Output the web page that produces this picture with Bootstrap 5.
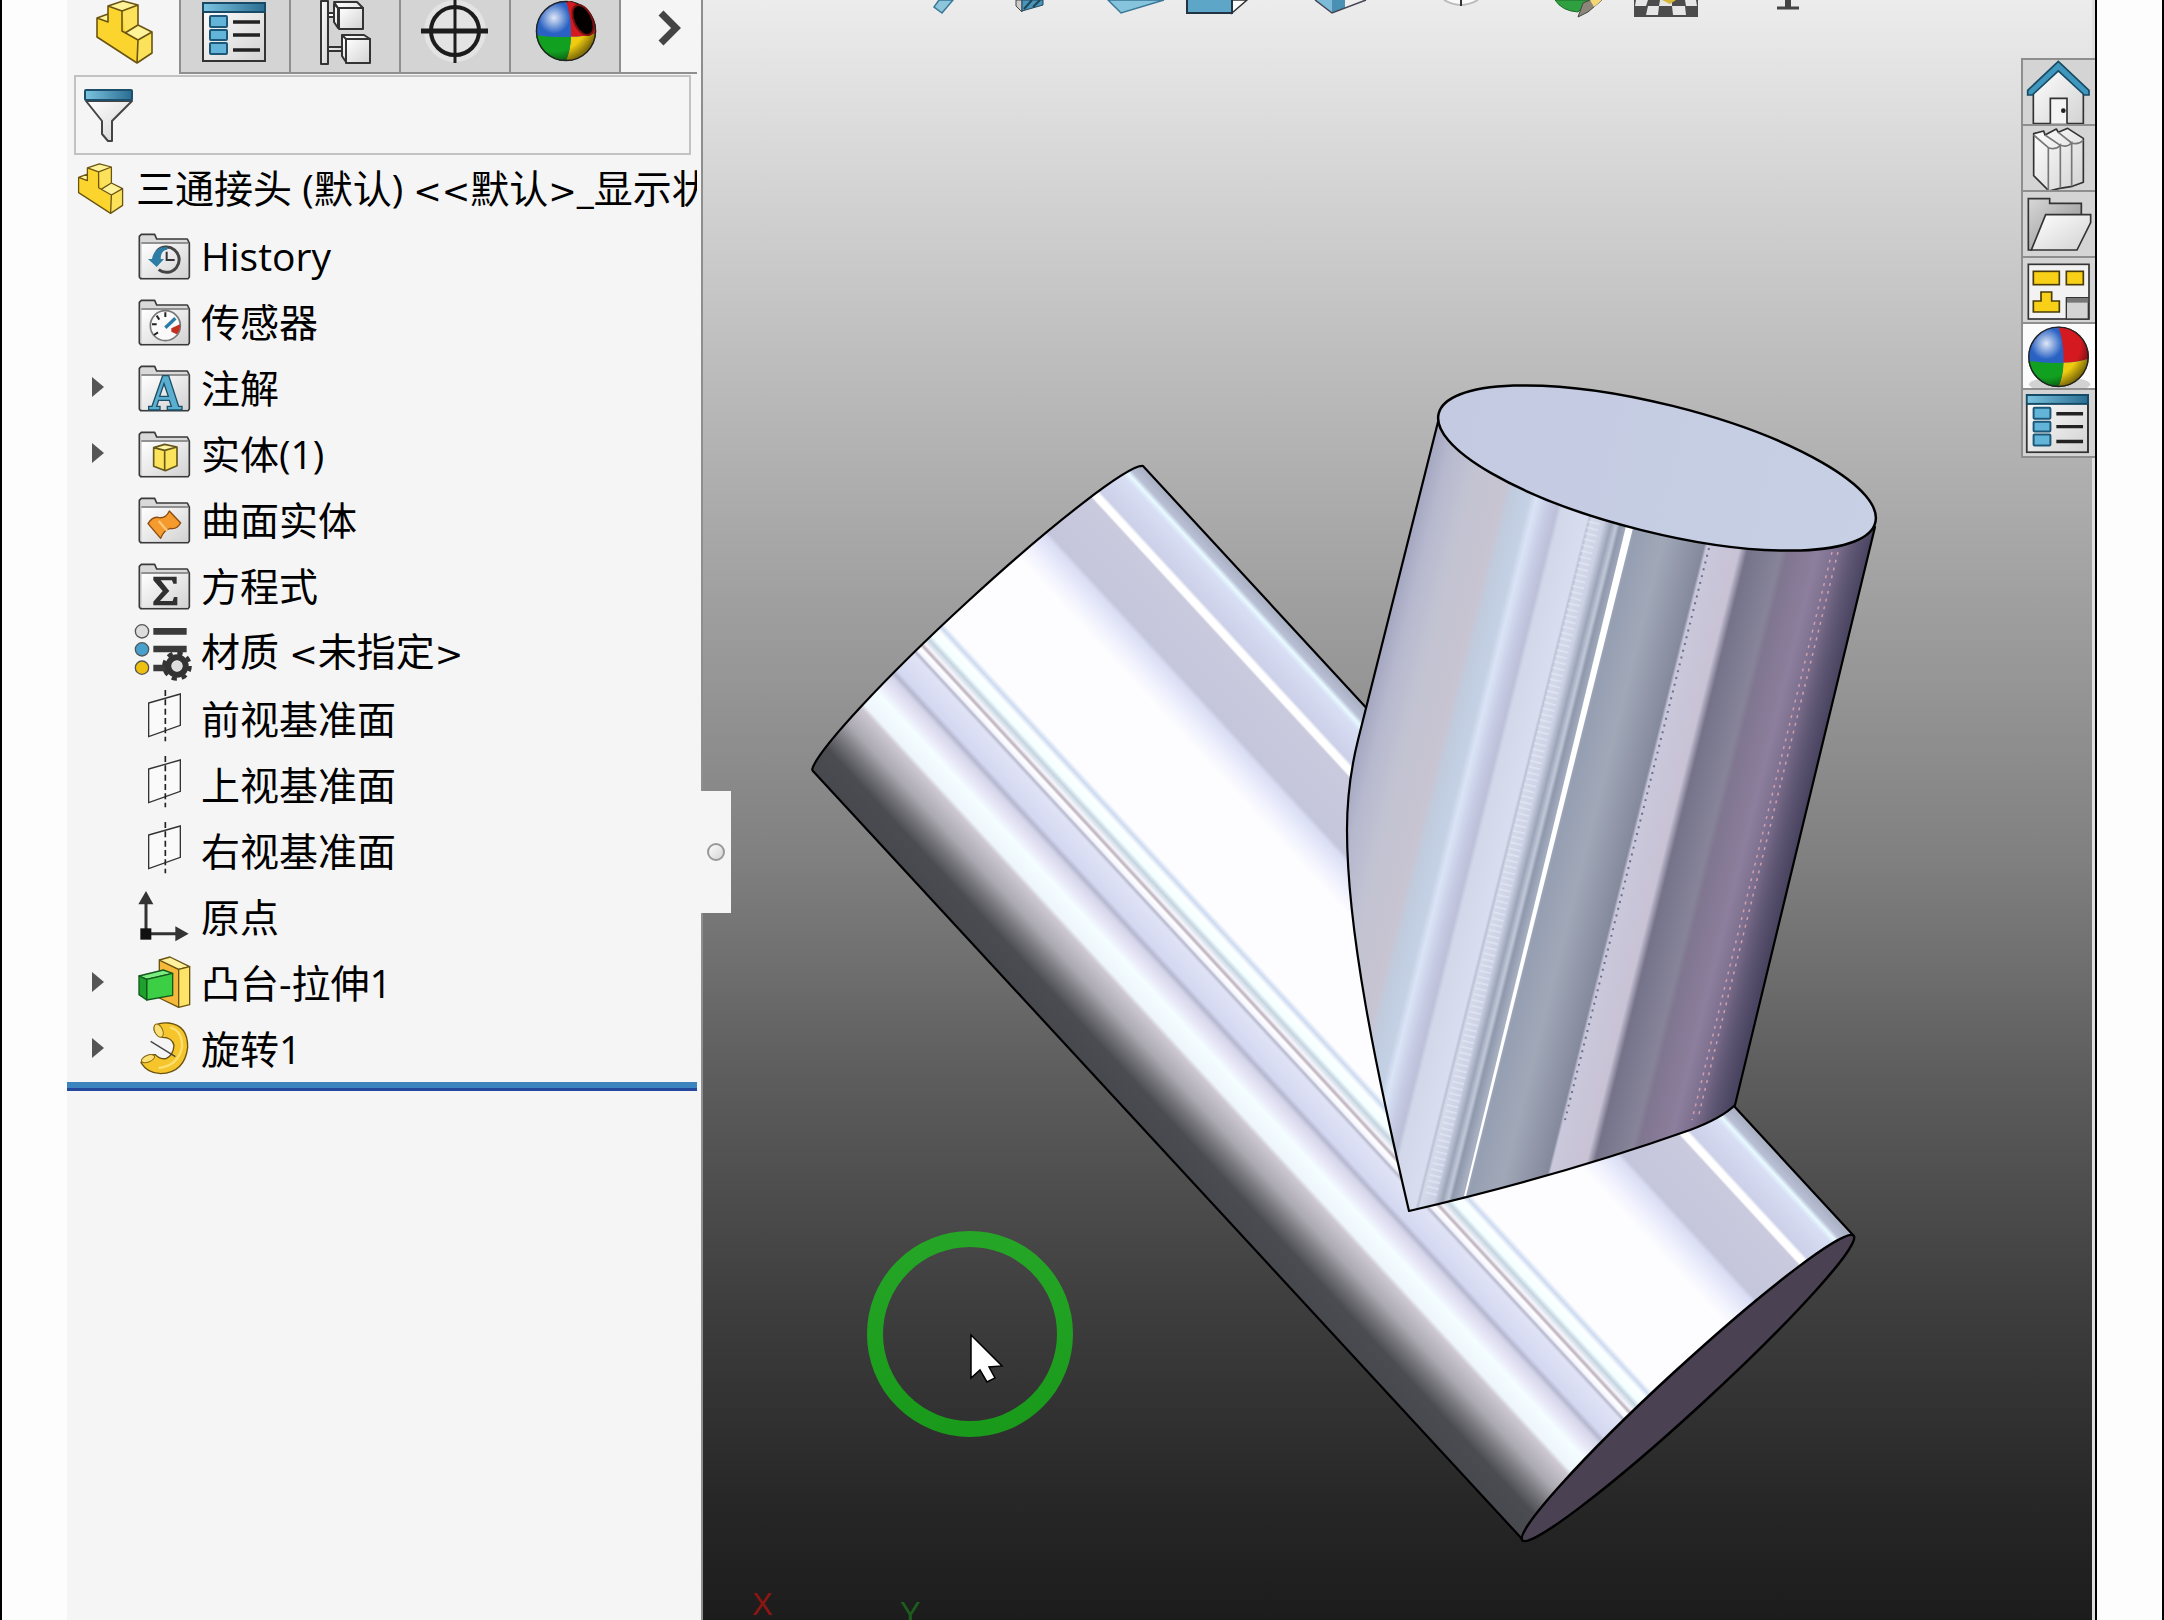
<!DOCTYPE html>
<html lang="zh-CN">
<head>
<meta charset="utf-8">
<meta name="viewport" content="width=device-width, initial-scale=1">
<title>三通接头</title>
<link href="https://cdn.jsdelivr.net/npm/bootstrap@5.3.0/dist/css/bootstrap.min.css" rel="stylesheet">
<style>
body{background:#fdfdfd;color:#000;font-family:"Open Sans","Noto Sans CJK SC",sans-serif;font-size:39px;line-height:48px}
svg{display:block;flex:none}
button{background:none;border:0;padding:0}
.edge-l{width:67px;border-left:2px solid #000}
.edge-r{width:69px;border-left:2px solid #000;border-right:2px solid #000}
.side{width:636px;background:#f5f5f5;border-right:2px solid #8e8e8e;padding-right:4px}
.tabs{height:74px}
.tabs .tab{width:110px;height:74px;background:#d4d4d4;border-left:2px solid #8f8f8f;border-bottom:2px solid #8f8f8f}
.tabs .tab svg{margin-left:-2px}
.tabs .tab.on{width:112px;background:#f5f5f5;border-color:transparent}
.tabs .more{border-left:2px solid #8f8f8f;border-bottom:2px solid #8f8f8f}
.filter{margin:1px 6px 0 7px;height:80px;border:2px solid #c2c2c2;padding:2px 0 0 8px}
.filter input{background:none;border:0;outline:0;min-width:0}
.root{height:68px;padding-left:9px;gap:10px;overflow:hidden}
.tree{height:859px}
.tree li{gap:7px;padding-left:25px}
.twist{width:35px;height:22px}
.ang{font-family:"DejaVu Sans",sans-serif;font-size:34px}
.rollback{height:9px;background:#3c84bd;border-bottom:3px solid #24489c}
.view{border-right:3px solid #dedede;background:linear-gradient(#ececec 0,#bdbdbd 22.2%,#808080 53%,#5e5e5e 66%,#3f3f3f 80%,#272727 92.6%,#1c1c1c 100%)}
.heads{left:197px}
.grip{left:-2px;top:791px;width:30px;height:122px;background:#f5f5f5}
.pane{top:58px;right:-3px;border:2px solid #8e8e8e;border-right:0;background:#d4d4d4}
.pane button{height:66px;border-bottom:2px solid #8e8e8e}
.pane button:last-child{border-bottom:0}
.pane .on{background:#fbfbfb}
</style>
<script src="https://cdn.jsdelivr.net/npm/bootstrap@5.3.0/dist/js/bootstrap.bundle.min.js"></script>
</head>
<body class="vh-100 d-flex overflow-hidden">
<svg width="0" height="0" class="position-absolute" aria-hidden="true">
<defs>
<linearGradient id="gb" x1="0" x2="1" y1="0" y2="0"><stop offset="0" stop-color="#7cc4e0"/><stop offset="1" stop-color="#2a6d92"/></linearGradient>
<linearGradient id="gw" x1="0" x2="1" y1="0" y2="1"><stop offset="0" stop-color="#fff"/><stop offset="1" stop-color="#d2d2d2"/></linearGradient>
<linearGradient id="gg" x1="0" x2="1" y1="0" y2="1"><stop offset="0" stop-color="#d8d8d8"/><stop offset="1" stop-color="#8c8c8c"/></linearGradient>
<radialGradient id="shade" cx=".3" cy=".28" r=".75"><stop offset="0" stop-color="#fff" stop-opacity=".85"/><stop offset=".35" stop-color="#fff" stop-opacity="0"/><stop offset=".75" stop-color="#000" stop-opacity="0"/><stop offset="1" stop-color="#000" stop-opacity=".45"/></radialGradient>
<symbol id="part" viewBox="95 0 60 65">
<path d="M97 18 108 14V6L123 1 138 5V25L152 32V53L137 63 97 37Z" fill="#fbd52e"/>
<path d="M108 6 123 1 138 5 122 11ZM97 18 108 14V22ZM125 33 138 25 152 32 138 40Z" fill="#fff39a"/>
<path d="M122 11 138 5V25L125 33V30ZM138 40 152 32V53L137 63Z" fill="#fbe25a"/>
<path d="M97 18 108 14V6L123 1 138 5V25L152 32V53L137 63 97 37ZM108 6 122 11V31L138 40 137 63M122 11 138 5M138 40 152 32M97 18 108 22V14M125 33 138 25" fill="none" stroke="#6a5410" stroke-width="1.6" stroke-linejoin="round"/>
</symbol>
<symbol id="ball" viewBox="0 0 64 64">
<circle cx="32" cy="32" r="31" fill="#2a62c4"/>
<path d="M32 1A31 31 0 0 1 63 34Q50 38 37 38 38 18 32 1Z" fill="#d41a20"/>
<path d="M63 34A31 31 0 0 1 32 63Q37 50 37 38 50 38 63 34Z" fill="#f0cc10"/>
<path d="M32 63A31 31 0 0 1 1 36Q18 39 37 38 37 50 32 63Z" fill="#12a020"/>
<circle cx="32" cy="32" r="31" fill="url(#shade)"/>
<circle cx="32" cy="32" r="30.5" fill="none" stroke="#222" stroke-width="1.5"/>
</symbol>
<symbol id="sheet" viewBox="0 0 64 60">
<rect x="1" y="1" width="62" height="58" fill="url(#gw)" stroke="#333" stroke-width="2"/>
<rect x="1" y="1" width="62" height="9" fill="url(#gb)" stroke="#164a66" stroke-width="2"/>
<g fill="#62b4d8" stroke="#1d5878" stroke-width="2"><rect x="8" y="14" width="17" height="11" rx="1"/><rect x="8" y="28" width="17" height="10" rx="1"/><rect x="8" y="41" width="17" height="11" rx="1"/></g>
<path d="M31 20H58M31 33H58M31 48H58" stroke="#222" stroke-width="3.4"/>
</symbol>
<symbol id="folder" viewBox="222 15 180 180">
<path d="M238 46 244 40H284L290 54H382L388 66V168L384 173H242L238 168Z" fill="#d9d9d9" stroke="#3a3a3a" stroke-width="5" stroke-linejoin="round"/>
<path d="M246 68H384V170H246Z" fill="url(#gw)"/><path d="M244 66H384" stroke="#777" stroke-width="4"/>
</symbol>
<symbol id="plane" viewBox="222 15 180 180">
<path d="M266 57 361 30V124L266 158Z" fill="#fafafa" stroke="#333" stroke-width="4"/>
<path d="M316 18V172" stroke="#222" stroke-width="5" stroke-dasharray="18 10"/>
</symbol>
</defs>
</svg>

<div class="edge-l flex-shrink-0"></div>

<aside class="side flex-shrink-0 d-flex flex-column">
<div class="tabs d-flex" role="tablist">
<button class="tab on" role="tab" aria-label="特征树"><svg width="110" height="72" viewBox="67 0 110 72"><use href="#part" x="95" y="0" width="60" height="65"/></svg></button>
<button class="tab" role="tab" aria-label="属性"><svg width="110" height="72" viewBox="178 0 110 72"><use href="#sheet" x="201" y="2" width="64" height="60"/></svg></button>
<button class="tab" role="tab" aria-label="配置"><svg width="110" height="72" viewBox="288 0 110 72"><g fill="url(#gw)" stroke="#333" stroke-width="2" stroke-linejoin="round"><path d="M327 13H338V17H327ZM327 47H345V51H327Z"/><rect x="320" y="1" width="7" height="63"/><path d="M337 8 333 4V22L337 28ZM333 2H356L362 8H337Z"/><rect x="338" y="8" width="24" height="21"/><path d="M345 39 341 35V56L345 62ZM341 35H363L369 39H345Z"/><rect x="345" y="39" width="24" height="24"/></g></svg></button>
<button class="tab" role="tab" aria-label="尺寸专家"><svg width="110" height="72" viewBox="399 0 110 72"><circle cx="455" cy="31" r="31" fill="#eee" opacity=".55"/><circle cx="455" cy="31" r="24" fill="none" stroke="#1c1c1c" stroke-width="4"/><path d="M455 0V63" stroke="#1c1c1c" stroke-width="3"/><path d="M421 31H488" stroke="#1c1c1c" stroke-width="5"/></svg></button>
<button class="tab" role="tab" aria-label="外观"><svg width="110" height="72" viewBox="509 0 110 72"><use href="#ball" x="535" y="0" width="62" height="62"/><path d="M568 1Q590 6 595 32 590 38 582 34 568 22 568 1Z" fill="#d41a20"/><ellipse cx="583" cy="20" rx="9" ry="16" transform="rotate(-25 583 20)" fill="#050000" stroke="#7a1010" stroke-width="2"/></svg></button>
<button class="more flex-fill" aria-label="更多"><svg width="74" height="72" viewBox="621 0 74 72"><path d="M661 13 676 28 661 43" fill="none" stroke="#444" stroke-width="7"/></svg></button>
</div>

<div class="filter d-flex align-items-center">
<label for="flt"><svg width="50" height="56" viewBox="84 89 50 56"><path d="M86 102 102 122V135L108 142H112V122L132 102Z" fill="url(#gw)" stroke="#444" stroke-width="2" stroke-linejoin="round"/><rect x="85" y="91" width="47" height="10" rx="1" fill="url(#gb)" stroke="#1d4f6c" stroke-width="2"/></svg></label>
<input id="flt" type="text" class="flex-fill" aria-label="过滤器">
</div>

<div class="root d-flex align-items-center text-nowrap">
<svg width="50" height="52"><use href="#part" width="50" height="52"/></svg>
<span>三通接头 (默认) <span class="ang">&lt;&lt;</span>默认<span class="ang">&gt;</span>_显示状</span>
</div>

<ul class="tree list-unstyled mb-0 d-flex flex-column text-nowrap">
<li class="d-flex flex-fill align-items-center"><span class="twist"></span><svg width="60" height="60" viewBox="222 15 180 180"><use href="#folder" x="222" y="15" width="180" height="180"/><path d="M290 92A38 38 0 1 1 296 146" fill="none" stroke="#444" stroke-width="9"/><path d="M264 114H276Q282 76 322 78L322 86Q302 88 302 114H312L290 138Z" fill="#2e7da4"/><path d="M320 92V117H344" fill="none" stroke="#333" stroke-width="6"/></svg><span>History</span></li>
<li class="d-flex flex-fill align-items-center"><span class="twist"></span><svg width="60" height="60" viewBox="222 15 180 180"><use href="#folder" x="222" y="15" width="180" height="180"/><circle cx="316" cy="116" r="45" fill="#fafafa" stroke="#777" stroke-width="5"/><path d="M316 76V90M290 86 298 98M276 112H290M282 144 294 136" stroke="#222" stroke-width="6"/><path d="M316 122 346 94" stroke="#2a7ca4" stroke-width="10"/><path d="M334 124 360 112Q362 130 350 142L334 134Z" fill="#c43020"/></svg><span>传感器</span></li>
<li class="d-flex flex-fill align-items-center"><button class="twist" aria-label="展开"><svg width="12" height="22"><path d="M0 0 12 10 0 20Z" fill="#555"/></svg></button><svg width="60" height="60" viewBox="222 15 180 180"><use href="#folder" x="222" y="15" width="180" height="180"/><path d="M308 68H326L356 160H366V171H322V160H334L328 142H296L290 160H300V171H266V160H276ZM312 92 299 130H325Z" fill="#5aaed0" fill-rule="evenodd" stroke="#1d4f66" stroke-width="4"/></svg><span>注解</span></li>
<li class="d-flex flex-fill align-items-center"><button class="twist" aria-label="展开"><svg width="12" height="22"><path d="M0 0 12 10 0 20Z" fill="#555"/></svg></button><svg width="60" height="60" viewBox="222 15 180 180"><use href="#folder" x="222" y="15" width="180" height="180"/><path d="M281 86 314 76 351 84V140L316 155 281 142Z" fill="#fbe45c"/><path d="M281 86 314 76 351 84 314 94Z" fill="#fff5a8"/><path d="M281 86 314 76 351 84V140L316 155 281 142ZM281 86 314 94 351 84M314 94V155" fill="none" stroke="#66581a" stroke-width="5" stroke-linejoin="round"/></svg><span>实体(1)</span></li>
<li class="d-flex flex-fill align-items-center"><span class="twist"></span><svg width="60" height="60" viewBox="222 15 180 180"><use href="#folder" x="222" y="15" width="180" height="180"/><path d="M264 116Q278 92 298 98 318 100 328 78L362 114Q350 134 332 130 312 134 302 160Z" fill="#f59a2c" stroke="#8a4a10" stroke-width="4" stroke-linejoin="round"/><path d="M296 108 322 138" stroke="#ffc878" stroke-width="7"/></svg><span>曲面实体</span></li>
<li class="d-flex flex-fill align-items-center"><span class="twist"></span><svg width="60" height="60" viewBox="222 15 180 180"><use href="#folder" x="222" y="15" width="180" height="180"/><path d="M280 77H350V98H340L336 88H302L328 120 300 150H338L342 138H352V163H280V152L308 120 280 88Z" fill="#303030"/></svg><span>方程式</span></li>
<li class="d-flex flex-fill align-items-center"><span class="twist"></span><svg width="60" height="60" viewBox="222 12 180 180"><path d="M280 37H380M280 90H380M280 147H320" stroke="#3a3a3a" stroke-width="20"/><g stroke="#555" stroke-width="4"><circle cx="246" cy="37" r="20" fill="#ddd"/><circle cx="246" cy="91" r="20" fill="#48a0cc"/><circle cx="246" cy="146" r="20" fill="#eec010"/></g><circle cx="351" cy="141" r="26" fill="none" stroke="#333" stroke-width="18"/><circle cx="351" cy="141" r="39" fill="none" stroke="#333" stroke-width="11" stroke-dasharray="16 14.6"/><circle cx="351" cy="141" r="16" fill="#ddd"/></svg><span>材质 <span class="ang">&lt;</span>未指定<span class="ang">&gt;</span></span></li>
<li class="d-flex flex-fill align-items-center"><span class="twist"></span><svg width="60" height="60"><use href="#plane" width="60" height="60"/></svg><span>前视基准面</span></li>
<li class="d-flex flex-fill align-items-center"><span class="twist"></span><svg width="60" height="60"><use href="#plane" width="60" height="60"/></svg><span>上视基准面</span></li>
<li class="d-flex flex-fill align-items-center"><span class="twist"></span><svg width="60" height="60"><use href="#plane" width="60" height="60"/></svg><span>右视基准面</span></li>
<li class="d-flex flex-fill align-items-center"><span class="twist"></span><svg width="60" height="60" viewBox="222 804 180 180"><path d="M258 840V944H350" fill="none" stroke="#333" stroke-width="9"/><path d="M258 816 280 856H235ZM386 944 346 922V967Z" fill="#333"/><path d="M241 928H274V962H241Z" fill="#111"/></svg><span>原点</span></li>
<li class="d-flex flex-fill align-items-center"><button class="twist" aria-label="展开"><svg width="12" height="22"><path d="M0 0 12 10 0 20Z" fill="#555"/></svg></button><svg width="60" height="60" viewBox="222 1001 180 180"><g stroke-width="4" stroke-linejoin="round"><g stroke="#6a5410"><path d="M298 1022 356 1050V1164L298 1136Z" fill="#f5b83a"/><path d="M298 1022 330 1013 389 1042 356 1050Z" fill="#fff0a0"/><path d="M356 1050 389 1042V1156L356 1164Z" fill="#fde468"/></g><g stroke="#125a1c"><path d="M237 1070 310 1052 338 1062 260 1080Z" fill="#7cec80"/><path d="M260 1080 338 1062V1128L260 1142Z" fill="#3cce44"/><path d="M237 1070 260 1080V1142L237 1126Z" fill="#1ea02c"/></g></g></svg><span>凸台-拉伸1</span></li>
<li class="d-flex flex-fill align-items-center"><button class="twist" aria-label="展开"><svg width="12" height="22"><path d="M0 0 12 10 0 20Z" fill="#555"/></svg></button><svg width="60" height="60" viewBox="222 1199 180 180"><path d="M284 1220Q300 1208 326 1211 384 1218 383 1284 374 1360 302 1363 262 1362 243 1330 252 1304 286 1306 300 1320 318 1318 340 1308 342 1278 336 1254 308 1254 276 1242 284 1220Z" fill="#f6c52c" stroke="#6a5410" stroke-width="4"/><path d="M330 1224Q368 1234 366 1284 354 1340 296 1346" fill="none" stroke="#fbe070" stroke-width="7"/><ellipse cx="296" cy="1234" rx="12" ry="21" transform="rotate(-25 296 1234)" fill="#fbe078" stroke="#8a6a14" stroke-width="3"/><ellipse cx="264" cy="1318" rx="21" ry="10" transform="rotate(-22 264 1318)" fill="#fbe078" stroke="#8a6a14" stroke-width="3"/><path d="M272 1266 346 1312" stroke="#444" stroke-width="4"/></svg><span>旋转1</span></li>
</ul>
<div class="rollback flex-shrink-0"></div>
</aside>

<main class="view flex-fill position-relative">
<svg class="w-100 h-100" viewBox="703 0 1389 1620" role="img" aria-label="三通接头模型">
<defs>
<linearGradient id="c1" gradientUnits="userSpaceOnUse" x1="809" y1="772" x2="1143" y2="464">
<stop offset="0" stop-color="#47484d"/><stop offset=".065" stop-color="#4b4c51"/><stop offset=".1" stop-color="#76767c"/><stop offset=".135" stop-color="#aaa8b0"/><stop offset=".18" stop-color="#cdc8d2"/><stop offset=".19" stop-color="#eef6fc"/><stop offset=".23" stop-color="#f4fdff"/><stop offset=".25" stop-color="#e8e8f8"/><stop offset=".275" stop-color="#d6d6ea"/><stop offset=".285" stop-color="#b6b8d0"/><stop offset=".295" stop-color="#d4d8f0"/><stop offset=".345" stop-color="#e0e3f6"/><stop offset=".352" stop-color="#b8bacc"/><stop offset=".357" stop-color="#f4f4ff"/><stop offset=".366" stop-color="#fff"/><stop offset=".372" stop-color="#bcb0bc"/><stop offset=".379" stop-color="#f6f6fc"/><stop offset=".392" stop-color="#c4d4e0"/><stop offset=".402" stop-color="#f4ffff"/><stop offset=".42" stop-color="#fcffff"/><stop offset=".43" stop-color="#ccdaf0"/><stop offset=".44" stop-color="#fdfdff"/><stop offset=".66" stop-color="#fdfdff"/><stop offset=".7" stop-color="#eceefc"/><stop offset=".735" stop-color="#dadef4"/><stop offset=".745" stop-color="#c4c6dc"/><stop offset=".865" stop-color="#cacade"/><stop offset=".87" stop-color="#fff"/><stop offset=".883" stop-color="#fff"/><stop offset=".89" stop-color="#ccd0e8"/><stop offset=".95" stop-color="#d8def4"/><stop offset=".962" stop-color="#e8faff"/><stop offset=".972" stop-color="#b8bed4"/><stop offset="1" stop-color="#a8aec0"/>
</linearGradient>
<linearGradient id="c2" gradientUnits="userSpaceOnUse" x1="1438" y1="418" x2="1875" y2="527">
<stop offset="0" stop-color="#a4a6c0"/><stop offset=".04" stop-color="#b6b8ce"/><stop offset=".1" stop-color="#c2c3d2"/><stop offset=".18" stop-color="#c8c4d2"/><stop offset=".2" stop-color="#c0ccde"/><stop offset=".24" stop-color="#c4d0e4"/><stop offset=".255" stop-color="#dae4f6"/><stop offset=".28" stop-color="#c8cee6"/><stop offset=".305" stop-color="#bcc0d8"/><stop offset=".315" stop-color="#d2d8ea"/><stop offset=".375" stop-color="#d8def0"/><stop offset=".38" stop-color="#bcc2d6"/><stop offset=".385" stop-color="#d4daea"/><stop offset=".412" stop-color="#ccd2e4"/><stop offset=".43" stop-color="#9ca4b8"/><stop offset=".442" stop-color="#c0c8d8"/><stop offset=".45" stop-color="#8f98ac"/><stop offset=".47" stop-color="#a8b0c2"/><stop offset=".485" stop-color="#969eb2"/><stop offset=".55" stop-color="#a0a8b8"/><stop offset=".642" stop-color="#85899c"/><stop offset=".648" stop-color="#cac8dc"/><stop offset=".72" stop-color="#c8c2d4"/><stop offset=".738" stop-color="#757389"/><stop offset=".81" stop-color="#87849a"/><stop offset=".825" stop-color="#807690"/><stop offset=".89" stop-color="#8c7e9c"/><stop offset=".93" stop-color="#7c6e8e"/><stop offset=".96" stop-color="#615975"/><stop offset="1" stop-color="#494460"/>
</linearGradient>
<linearGradient id="c3" x1="0" x2="1"><stop offset="0" stop-color="#c4cae1"/><stop offset="1" stop-color="#c7d0e5"/></linearGradient>
<linearGradient id="ring" x1="0" x2="0" y1="0" y2="1"><stop offset="0" stop-color="#26a626"/><stop offset="1" stop-color="#1a9a1a"/></linearGradient>
</defs>
<path d="M812 770A226 21 -42.7 0 1 1143 466L1853 1235 1523 1540Z" fill="url(#c1)"/>
<path d="M812 770A226 21 -42.7 0 1 1143 466L1853 1235M812 770 1523 1540" fill="none" stroke="#000" stroke-width="2.2"/>
<ellipse cx="1688" cy="1388" rx="225" ry="21" transform="rotate(-42.6 1688 1388)" fill="#4a4153" stroke="#000" stroke-width="2.5"/>
<path d="M1439 418 1358 740Q1347 784 1347 830C1347 930 1376 1070 1409 1211Q1560 1176 1690 1130 1722 1118 1735 1105L1875 527Z" fill="url(#c2)" stroke="#000" stroke-width="2.2" stroke-linejoin="round"/>
<path d="M1626 526 1633 528 1466 1196 1464 1196Z" fill="#fff"/>
<path d="M1709 548 1565 1120" stroke="#6d7088" stroke-width="2" stroke-dasharray="2 5"/>
<path d="M1832 552 1692 1120M1838 552 1698 1118" stroke="#cfa0ac" stroke-width="1.5" stroke-dasharray="3 5"/>
<path d="M1594 522 1431 1195" stroke="#e8eefa" stroke-width="12" stroke-dasharray="2 4" opacity=".5"/>
<ellipse cx="1657" cy="468" rx="225" ry="64" transform="rotate(14 1657 468)" fill="url(#c3)" stroke="#000" stroke-width="2.5"/>
<circle cx="970" cy="1334" r="95" fill="none" stroke="url(#ring)" stroke-width="16"/>
<path d="M971 1335V1378L980 1370 987 1382 995 1378 989 1367 1002 1366Z" fill="#fff" stroke="#000" stroke-width="1.5"/>
<text x="752" y="1615" font-family="Liberation Sans, sans-serif" font-size="31" fill="#8e1612">X</text>
<text x="900" y="1624" font-family="Liberation Sans, sans-serif" font-size="31" fill="#1c5e1c">Y</text>
</svg>

<div class="heads position-absolute top-0 d-flex" role="toolbar">
<button aria-label="放大"><svg width="85" height="24" viewBox="900 0 85 24"><path d="M939 0 934 7 942 13 953 0Z" fill="#8cc4dc" stroke="#3a7896" stroke-width="1.5"/></svg></button>
<button aria-label="剖面"><svg width="100" height="24" viewBox="985 0 100 24"><path d="M1016 0V6L1022 12V0Z" fill="#ccc" stroke="#444"/><path d="M1022 0V11L1043 5V0Z" fill="#4a94b8" stroke="#244a5c"/><path d="M1024 9 1032 0M1033 7 1040 0" stroke="#1d4458" stroke-width="2"/></svg></button>
<button aria-label="视图"><svg width="95" height="24" viewBox="1085 0 95 24"><path d="M1108 0 1121 13 1164 0Z" fill="#86c4de" stroke="#3a7896" stroke-width="1.5"/></svg></button>
<button aria-label="视图定向"><svg width="95" height="24" viewBox="1180 0 95 24"><path d="M1232 13 1247 0H1232Z" fill="#fff" stroke="#333" stroke-width="1.5"/><path d="M1187 -2H1232V13H1187Z" fill="#5ea6c8" stroke="#234" stroke-width="2"/></svg></button>
<button aria-label="显示样式"><svg width="125" height="24" viewBox="1275 0 125 24"><path d="M1315 0 1332 13V0Z" fill="#7cbcd8"/><path d="M1332 0V13L1366 0Z" fill="#4a90b4"/><path d="M1345 8V0H1366Z" fill="#eee"/><path d="M1315 0 1332 13 1366 0" fill="none" stroke="#445" stroke-width="1.5"/></svg></button>
<button aria-label="隐藏"><svg width="120" height="24" viewBox="1400 0 120 24"><path d="M1444 0Q1461 10 1478 0" fill="#fafafa" stroke="#bbb" stroke-width="2"/><path d="M1461 0V6" stroke="#333" stroke-width="2"/></svg></button>
<button aria-label="编辑外观"><svg width="100" height="24" viewBox="1520 0 100 24"><path d="M1555 0Q1562 11 1578 12L1590 0Z" fill="#2ea040" stroke="#1d6a2a"/><path d="M1583 3 1590 0H1602L1588 12 1578 17Z" fill="#8c8678" stroke="#444"/><path d="M1590 0H1602L1594 7Z" fill="#f2d874"/></svg></button>
<button aria-label="布景"><svg width="100" height="24" viewBox="1620 0 100 24"><path d="M1634 0H1698V17H1634Z" fill="#4c4c4c"/><path d="M1636 0H1648L1646 6H1635ZM1660 0H1672V6H1659ZM1685 0H1696L1697 6H1686ZM1648 6H1659L1658 15H1646ZM1672 6H1685L1686 15H1673Z" fill="#e6e6e6"/><path d="M1662 0H1676L1670 4Z" fill="#d8b83a"/></svg></button>
<button aria-label="视图设置"><svg width="120" height="24" viewBox="1720 0 120 24"><path d="M1788 0V8" stroke="#444" stroke-width="6"/><path d="M1777 8H1799" stroke="#444" stroke-width="3"/></svg></button>
</div>

<button class="grip position-absolute" aria-label="折叠"><svg width="30" height="122"><circle cx="15" cy="61" r="8" fill="url(#gw)" stroke="#999" stroke-width="2"/></svg></button>

<div class="pane position-absolute d-flex flex-column" role="toolbar">
<button aria-label="主页"><svg width="72" height="64" viewBox="130 91 216 192"><path d="M161 282V188L236 120 311 188V282Z" fill="url(#gw)" stroke="#333" stroke-width="5"/><path d="M212 282V206H262V282" fill="#f4f4f4" stroke="#333" stroke-width="5"/><circle cx="251" cy="243" r="7" fill="#222"/><path d="M144 196V182L236 95 328 182V196H314L236 124 158 196Z" fill="#3f97be" stroke="#174a64" stroke-width="5"/></svg></button>
<button aria-label="设计库"><svg width="72" height="64" viewBox="130 287 216 192"><path d="M162 310 192 302 196 314 230 296 236 306 264 294 311 324V456L278 468 240 474 208 482 162 436Z" fill="url(#gw)" stroke="#333" stroke-width="5" stroke-linejoin="round"/><path d="M162 314 206 352V480M206 352Q230 360 242 345V474M242 345Q262 352 276 338V468M276 338Q296 344 311 330M196 314 242 345M236 306 276 338" fill="none" stroke="#777" stroke-width="5"/></svg></button>
<button aria-label="文件探索器"><svg width="72" height="64" viewBox="130 486 216 192"><path d="M146 660V506H210V520H305V560H200L156 660Z" fill="url(#gg)" stroke="#333" stroke-width="5"/><path d="M155 660 198 554H333V578L292 660Z" fill="url(#gw)" stroke="#333" stroke-width="5"/></svg></button>
<button aria-label="视图调色板"><svg width="72" height="64" viewBox="130 685 216 192"><rect x="146" y="704" width="182" height="164" fill="#f2f2f2" stroke="#333" stroke-width="5"/><g fill="#f8d018" stroke="#4a3c08" stroke-width="5"><rect x="161" y="725" width="78" height="40"/><rect x="260" y="725" width="51" height="40"/><path d="M161 847V814H184V787H216V814H239V847Z"/></g><rect x="260" y="804" width="66" height="64" fill="#d4d4d4" stroke="#333" stroke-width="4"/><path d="M262 812H326" stroke="#777" stroke-width="14"/></svg></button>
<button class="on" aria-label="外观、布景"><svg width="72" height="64" viewBox="130 883 216 192"><ellipse cx="240" cy="1064" rx="92" ry="22" fill="#888" opacity=".35"/><use href="#ball" x="143" y="888" width="187" height="187"/></svg></button>
<button aria-label="自定义属性"><svg width="72" height="64" viewBox="130 1082 216 192"><use href="#sheet" x="138" y="1091" width="190" height="178"/></svg></button>
</div>
</main>

<div class="edge-r flex-shrink-0"></div>
</body>
</html>
